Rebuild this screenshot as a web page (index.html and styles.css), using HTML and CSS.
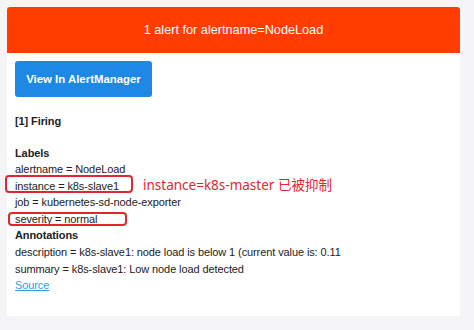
FILE: index.html
```html
<!DOCTYPE html>
<html lang="en">
<head>
    <meta charset="UTF-8">
    <meta name="viewport" content="width=device-width, initial-scale=1.0">
    <title>Alert Mail</title>
    <link rel="stylesheet" href="styles.css">
</head>
<body>
    <div class="mail">
        <div class="mail-header">1 alert for alertname=NodeLoad</div>
        <div class="mail-body">
            <a class="am-button" href="#">View In AlertManager</a>
            <div class="firing">[1] Firing</div>
            <div class="section-title labels-title">Labels</div>
            <div class="row">alertname = NodeLoad</div>
            <div class="row marked">
                instance = k8s-slave1
                <span class="box box-instance"></span>
                <span class="note">instance=k8s-master 已被抑制</span>
            </div>
            <div class="row">job = kubernetes-sd-node-exporter</div>
            <div class="row marked">
                severity = normal
                <span class="box box-severity"></span>
            </div>
            <div class="section-title">Annotations</div>
            <div class="row">description = k8s-slave1: node load is below 1 (current value is: 0.11</div>
            <div class="row">summary = k8s-slave1: Low node load detected</div>
            <div class="row"><a class="source" href="#">Source</a></div>
        </div>
    </div>
</body>
</html>
```

FILE: styles.css
```css
body {
    margin: 0;
    padding: 7px 14px 14px 7px;
    background: #f5f5f7;
    font-family: "Liberation Sans", Arial, sans-serif;
    color: #222;
}

.mail {
    width: 453px;
    height: 309px;
    background: #fff;
}

.mail-header {
    height: 46px;
    line-height: 46px;
    background: #ff3d00;
    color: #fff;
    font-size: 12.7px;
    text-align: center;
    border-radius: 3px 3px 0 0;
}

.mail-body {
    padding: 8px 8px 0 8px;
    font-size: 11px;
    letter-spacing: -0.1px;
}

.am-button {
    display: block;
    width: 137px;
    height: 36px;
    line-height: 36px;
    background: #1e88e5;
    color: #fff;
    text-align: center;
    font-weight: bold;
    font-size: 11.4px;
    letter-spacing: 0;
    text-decoration: none;
    border-radius: 3px;
}

.firing {
    margin-top: 16px;
    line-height: 16.5px;
    font-weight: bold;
}

.section-title {
    line-height: 16.6px;
    font-weight: bold;
}

.labels-title {
    margin-top: 15px;
}

.row {
    line-height: 16.6px;
    position: relative;
}

.box {
    position: absolute;
    border: 2px solid #e3262e;
    border-radius: 4px;
}

.box-instance {
    left: -10px;
    top: -3px;
    width: 124px;
    height: 14px;
}

.box-severity {
    left: -7px;
    top: 1px;
    width: 115px;
    height: 10px;
}

.note {
    position: absolute;
    left: 128px;
    top: -1px;
    color: #e3262e;
    font-family: "Noto Sans", "Noto Sans CJK SC", sans-serif;
    font-size: 13.5px;
    letter-spacing: 0;
    white-space: nowrap;
}

.source {
    color: #2e9be6;
}
```
